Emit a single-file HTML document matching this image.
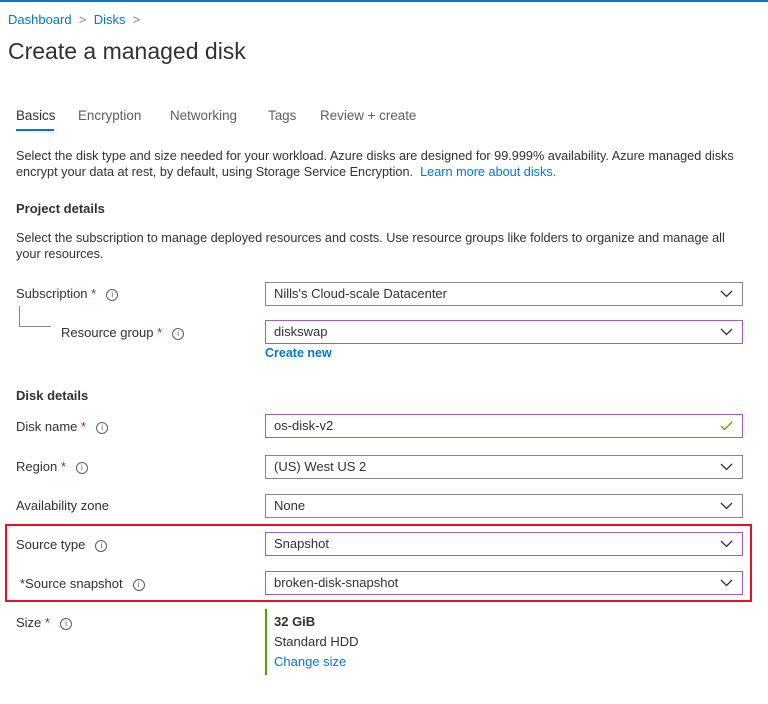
<!DOCTYPE html>
<html><head><style>
body{margin:0;width:768px;height:704px;background:#fff;font-family:"Liberation Sans",sans-serif;color:#323130;position:relative;overflow:hidden;font-size:13px}
.a{position:absolute;white-space:nowrap}
.lnk{color:#0078d4}
.box{position:absolute;left:265px;width:476px;height:22px;border:1px solid #8a8886;font-size:13px;line-height:22px;text-indent:8px;color:#323130}
.p{border-color:#a45bc7}
.chev{position:absolute;right:9px;top:5px}
.req{color:#a4262c}
.i{display:inline-block;width:10px;height:10px;border:1px solid #605e5c;border-radius:50%;font-size:8px;line-height:10px;text-align:center;color:#605e5c;vertical-align:1px;margin-left:10px;text-indent:0}
.d{left:16px;font-size:12.7px;line-height:16px;width:745px;white-space:normal}
</style></head><body>
<div class="a" style="left:0;top:0;width:768px;height:2px;background:#0078d4"></div>
<div class="a" style="left:8px;top:12px;font-size:13px"><span class="lnk">Dashboard</span> <span style="color:#888">&nbsp;&gt;&nbsp;</span> <span class="lnk">Disks</span> <span style="color:#888">&nbsp;&gt;</span></div>
<div class="a" style="left:8px;top:38px;font-size:23px;color:#323130">Create a managed disk</div>
<div class="a" style="left:16px;top:108px;font-size:13.4px;color:#323130">Basics</div>
<div class="a" style="left:16px;top:129px;width:38px;height:2px;background:#0078d4"></div>
<div class="a" style="left:78px;top:108px;font-size:13.4px;color:#605e5c">Encryption</div>
<div class="a" style="left:170px;top:108px;font-size:13.4px;color:#605e5c">Networking</div>
<div class="a" style="left:268px;top:108px;font-size:13.4px;color:#605e5c">Tags</div>
<div class="a" style="left:320px;top:108px;font-size:13.4px;color:#605e5c">Review + create</div>
<div class="a d" style="top:148px">Select the disk type and size needed for your workload. Azure disks are designed for 99.999% availability. Azure managed disks encrypt your data at rest, by default, using Storage Service Encryption. &nbsp;<span class="lnk">Learn more about disks.</span></div>
<div class="a" style="left:16px;top:201px;font-size:13px;font-weight:600">Project details</div>
<div class="a d" style="top:230px;width:730px">Select the subscription to manage deployed resources and costs. Use resource groups like folders to organize and manage all your resources.</div>

<div class="a" style="left:16px;top:286px">Subscription <span class="req">*</span><span class="i">i</span></div>
<div class="a" style="left:19px;top:306px;width:1px;height:20px;background:#8a8886"></div>
<div class="a" style="left:19px;top:326px;width:32px;height:1px;background:#8a8886"></div>
<div class="a" style="left:61px;top:325px">Resource group <span class="req">*</span><span class="i">i</span></div>
<div class="a" style="left:265px;top:346px;font-weight:bold;color:#0078d4;font-size:12.5px">Create new</div>
<div class="a" style="left:16px;top:388px;font-size:13px;font-weight:600">Disk details</div>
<div class="a" style="left:16px;top:419px">Disk name <span class="req">*</span><span class="i">i</span></div>
<div class="a" style="left:16px;top:459px">Region <span class="req">*</span><span class="i">i</span></div>
<div class="a" style="left:16px;top:498px">Availability zone</div>
<div class="a" style="left:16px;top:537px">Source type<span class="i">i</span></div>
<div class="a" style="left:20px;top:576px">*Source snapshot<span class="i">i</span></div>
<div class="a" style="left:16px;top:615px">Size <span class="req">*</span><span class="i">i</span></div>

<div class="box" style="top:282px">Nills's Cloud-scale Datacenter<svg class="chev" width="13" height="12"><path d="M1 3l5.5 5.5L12 3" stroke="#323130" fill="none" stroke-width="1.3"/></svg></div>
<div class="box p" style="top:320px">diskswap<svg class="chev" width="13" height="12"><path d="M1 3l5.5 5.5L12 3" stroke="#323130" fill="none" stroke-width="1.3"/></svg></div>
<div class="box p" style="top:414px">os-disk-v2<svg class="chev" width="13" height="12"><path d="M1 6l3.5 3.5L12 2" stroke="#57a300" fill="none" stroke-width="1.3"/></svg></div>
<div class="box" style="top:455px">(US) West US 2<svg class="chev" width="13" height="12"><path d="M1 3l5.5 5.5L12 3" stroke="#323130" fill="none" stroke-width="1.3"/></svg></div>
<div class="box" style="top:494px">None<svg class="chev" width="13" height="12"><path d="M1 3l5.5 5.5L12 3" stroke="#323130" fill="none" stroke-width="1.3"/></svg></div>
<div class="box p" style="top:532px">Snapshot<svg class="chev" width="13" height="12"><path d="M1 3l5.5 5.5L12 3" stroke="#323130" fill="none" stroke-width="1.3"/></svg></div>
<div class="box p" style="top:571px">broken-disk-snapshot<svg class="chev" width="13" height="12"><path d="M1 3l5.5 5.5L12 3" stroke="#323130" fill="none" stroke-width="1.3"/></svg></div>
<div class="a" style="left:5px;top:524px;width:743px;height:74px;border:2px solid #e81123"></div>

<div class="a" style="left:265px;top:609px;width:2px;height:66px;background:#57a300"></div>
<div class="a" style="left:274px;top:614px;font-weight:bold;font-size:13px">32 GiB</div>
<div class="a" style="left:274px;top:634px">Standard HDD</div>
<div class="a lnk" style="left:274px;top:654px">Change size</div>
</body></html>
